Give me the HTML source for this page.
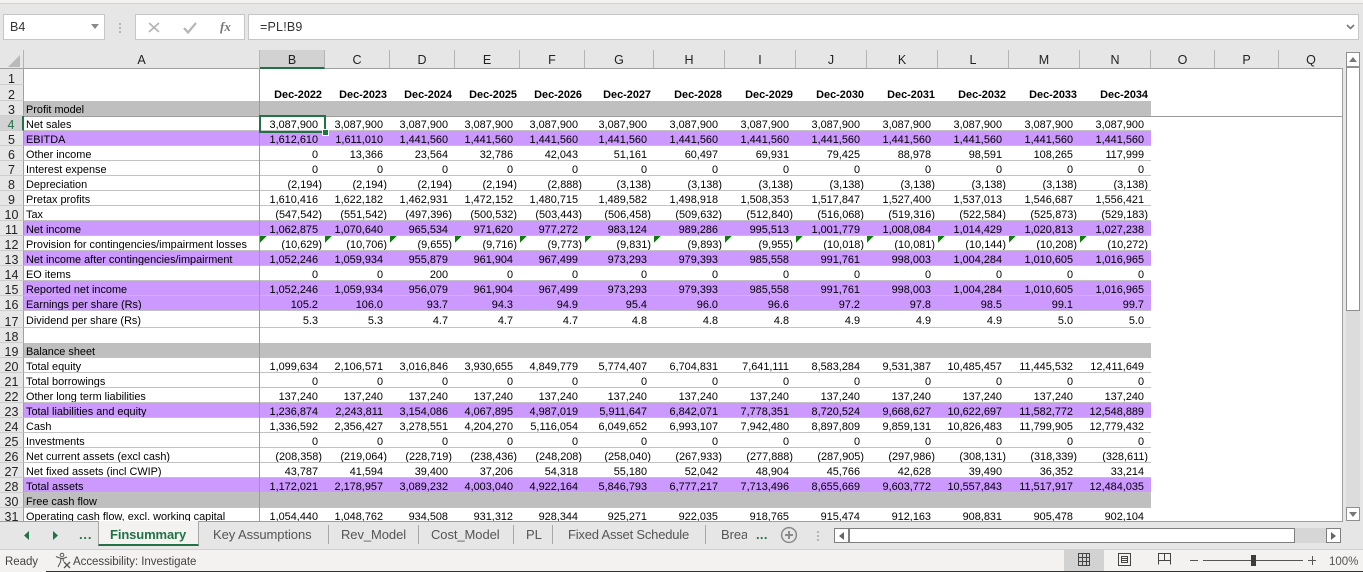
<!DOCTYPE html>
<html><head><meta charset="utf-8"><title>Finsummary</title>
<style>
html,body{margin:0;padding:0;width:1363px;height:572px;overflow:hidden;background:#e6e6e6}
body{position:relative;font-family:"Liberation Sans",Arial,sans-serif;color:#000}
.a{position:absolute}
.box{position:absolute;background:#fff;border:1px solid #c6c6c6;box-sizing:border-box}
.ch{position:absolute;top:50px;height:19px;box-sizing:border-box;border-right:1px solid #b4b4b4;border-bottom:1px solid #9f9f9f;font-size:12.5px;line-height:20px;text-align:center;color:#222}
#grid{position:absolute;left:0;top:69px;width:1342px;height:452px;overflow:hidden;background:#fff}
table{border-collapse:separate;border-spacing:0;table-layout:fixed;width:1151px;font-size:10.9px}
td,th{padding:0;box-sizing:border-box;white-space:nowrap;overflow:hidden}
th{background:#e6e6e6;font-weight:normal;font-size:12.5px;color:#222;text-align:center;border-right:1px solid #9f9f9f;border-bottom:1px solid #cdcdcd;line-height:10px;padding-top:4px;vertical-align:top}
td{text-align:right;padding-right:7px;border-bottom:1px solid #c2c2c2;vertical-align:bottom;line-height:9px}
td.l{text-align:left;padding:0 0 0 2px}
tr{height:15px}
tr.g td{background:#bfbfbf}
tr.v td{background:#cc99ff}
tr.p td{padding-right:3px}
tr.p td.l{padding:0 0 0 2px}
tr.n td{border-bottom:0;line-height:11px}
tr.r td{padding-bottom:1px}
tr.t td+td{background:linear-gradient(135deg,#0a7d0a 0,#0a7d0a 4.6px,transparent 4.7px) no-repeat}
.tab{position:absolute;top:525px;font-size:13px;line-height:19px;color:#555;letter-spacing:-.08px;white-space:nowrap}
.sep{position:absolute;top:525px;width:1px;height:19px;background:#a8a8a8}
.st{position:absolute;font-size:11.5px;color:#444;line-height:14px;letter-spacing:-.05px;white-space:nowrap}
</style></head><body>

<div class="a" style="left:0;top:0;width:1363px;height:3px;background:#f3f2f1;border-bottom:1px solid #d4d4d4"></div>

<!-- formula bar -->
<div class="box" style="left:3px;top:14px;width:102px;height:26px;font-size:12.5px;line-height:24px;padding-left:6px;color:#333">B4</div>
<svg class="a" style="left:91px;top:24px" width="8" height="5"><path d="M0 0H8L4 5Z" fill="#8a8a8a"/></svg>
<div class="a" style="left:119px;top:23px;width:2px;height:2px;background:#b5b5b5;box-shadow:0 4px #b5b5b5,0 8px #b5b5b5"></div>
<div class="box" style="left:135px;top:14px;width:110px;height:26px"></div>
<svg class="a" style="left:148px;top:22px" width="12" height="11"><path d="M1 1L11 10M11 1L1 10" stroke="#b5b5b5" stroke-width="1.7" fill="none"/></svg>
<svg class="a" style="left:183px;top:22px" width="14" height="12"><path d="M1 6L5 10.5L13 1" stroke="#b5b5b5" stroke-width="2.2" fill="none"/></svg>
<div class="a" style="left:220px;top:19px;font:italic bold 13px/16px 'Liberation Serif',serif;color:#777">fx</div>
<div class="box" style="left:248px;top:14px;width:1111px;height:26px;font-size:12.5px;line-height:24px;padding-left:11px;color:#333;letter-spacing:.2px">=PL!B9</div>
<svg class="a" style="left:1346px;top:24px" width="9" height="6"><path d="M1 1L4.5 4.5L8 1" stroke="#777" stroke-width="1.6" fill="none"/></svg>

<!-- column headers -->
<div class="a" style="left:0;top:50px;width:24px;height:19px;border-right:1px solid #b4b4b4;border-bottom:1px solid #9f9f9f;box-sizing:border-box"></div>
<svg class="a" style="left:8px;top:55px" width="12" height="12"><path d="M12 0V12H0Z" fill="#b9b9b9"/></svg>
<div class="ch" style="left:24px;width:236px">A</div>
<div class="ch" style="left:260px;width:65px;background:#d2d2d2;border-bottom:2px solid #217346">B</div>
<div class="ch" style="left:325px;width:65px">C</div>
<div class="ch" style="left:390px;width:65px">D</div>
<div class="ch" style="left:455px;width:65px">E</div>
<div class="ch" style="left:520px;width:65px">F</div>
<div class="ch" style="left:585px;width:69px">G</div>
<div class="ch" style="left:654px;width:71px">H</div>
<div class="ch" style="left:725px;width:71px">I</div>
<div class="ch" style="left:796px;width:71px">J</div>
<div class="ch" style="left:867px;width:71px">K</div>
<div class="ch" style="left:938px;width:71px">L</div>
<div class="ch" style="left:1009px;width:71px">M</div>
<div class="ch" style="left:1080px;width:71px">N</div>
<div class="ch" style="left:1151px;width:64px">O</div>
<div class="ch" style="left:1215px;width:64px">P</div>
<div class="ch" style="left:1279px;width:64px;border-right:0">Q</div>

<!-- grid -->
<div id="grid">
<table>
<colgroup><col style="width:24px"><col style="width:236px"><col style="width:65px"><col style="width:65px"><col style="width:65px"><col style="width:65px"><col style="width:65px"><col style="width:69px"><col style="width:71px"><col style="width:71px"><col style="width:71px"><col style="width:71px"><col style="width:71px"><col style="width:71px"><col style="width:71px"></colgroup>
<tr class="n" style="height:16px"><th style="padding-top:5px">1</th><td class="l"></td><td></td><td></td><td></td><td></td><td></td><td></td><td></td><td></td><td></td><td></td><td></td><td></td><td></td></tr>
<tr class="n p" style="height:16px;font-weight:bold"><th style="padding-top:5px">2</th><td class="l"></td><td>Dec-2022</td><td>Dec-2023</td><td>Dec-2024</td><td>Dec-2025</td><td>Dec-2026</td><td>Dec-2027</td><td>Dec-2028</td><td>Dec-2029</td><td>Dec-2030</td><td>Dec-2031</td><td>Dec-2032</td><td>Dec-2033</td><td>Dec-2034</td></tr>
<tr class="g"><th>3</th><td class="l">Profit model</td><td></td><td></td><td></td><td></td><td></td><td></td><td></td><td></td><td></td><td></td><td></td><td></td><td></td></tr>
<tr><th style="background:#d2d2d2;color:#217346;border-right:2px solid #217346">4</th><td class="l">Net sales</td><td>3,087,900</td><td>3,087,900</td><td>3,087,900</td><td>3,087,900</td><td>3,087,900</td><td>3,087,900</td><td>3,087,900</td><td>3,087,900</td><td>3,087,900</td><td>3,087,900</td><td>3,087,900</td><td>3,087,900</td><td>3,087,900</td></tr>
<tr class="v"><th>5</th><td class="l">EBITDA</td><td>1,612,610</td><td>1,611,010</td><td>1,441,560</td><td>1,441,560</td><td>1,441,560</td><td>1,441,560</td><td>1,441,560</td><td>1,441,560</td><td>1,441,560</td><td>1,441,560</td><td>1,441,560</td><td>1,441,560</td><td>1,441,560</td></tr>
<tr><th>6</th><td class="l">Other income</td><td>0</td><td>13,366</td><td>23,564</td><td>32,786</td><td>42,043</td><td>51,161</td><td>60,497</td><td>69,931</td><td>79,425</td><td>88,978</td><td>98,591</td><td>108,265</td><td>117,999</td></tr>
<tr><th>7</th><td class="l">Interest expense</td><td>0</td><td>0</td><td>0</td><td>0</td><td>0</td><td>0</td><td>0</td><td>0</td><td>0</td><td>0</td><td>0</td><td>0</td><td>0</td></tr>
<tr class="p"><th>8</th><td class="l">Depreciation</td><td>(2,194)</td><td>(2,194)</td><td>(2,194)</td><td>(2,194)</td><td>(2,888)</td><td>(3,138)</td><td>(3,138)</td><td>(3,138)</td><td>(3,138)</td><td>(3,138)</td><td>(3,138)</td><td>(3,138)</td><td>(3,138)</td></tr>
<tr><th>9</th><td class="l">Pretax profits</td><td>1,610,416</td><td>1,622,182</td><td>1,462,931</td><td>1,472,152</td><td>1,480,715</td><td>1,489,582</td><td>1,498,918</td><td>1,508,353</td><td>1,517,847</td><td>1,527,400</td><td>1,537,013</td><td>1,546,687</td><td>1,556,421</td></tr>
<tr class="p"><th>10</th><td class="l">Tax</td><td>(547,542)</td><td>(551,542)</td><td>(497,396)</td><td>(500,532)</td><td>(503,443)</td><td>(506,458)</td><td>(509,632)</td><td>(512,840)</td><td>(516,068)</td><td>(519,316)</td><td>(522,584)</td><td>(525,873)</td><td>(529,183)</td></tr>
<tr class="v"><th>11</th><td class="l">Net income</td><td>1,062,875</td><td>1,070,640</td><td>965,534</td><td>971,620</td><td>977,272</td><td>983,124</td><td>989,286</td><td>995,513</td><td>1,001,779</td><td>1,008,084</td><td>1,014,429</td><td>1,020,813</td><td>1,027,238</td></tr>
<tr class="p t"><th>12</th><td class="l">Provision for contingencies/impairment losses</td><td>(10,629)</td><td>(10,706)</td><td>(9,655)</td><td>(9,716)</td><td>(9,773)</td><td>(9,831)</td><td>(9,893)</td><td>(9,955)</td><td>(10,018)</td><td>(10,081)</td><td>(10,144)</td><td>(10,208)</td><td>(10,272)</td></tr>
<tr class="v"><th>13</th><td class="l">Net income after contingencies/impairment</td><td>1,052,246</td><td>1,059,934</td><td>955,879</td><td>961,904</td><td>967,499</td><td>973,293</td><td>979,393</td><td>985,558</td><td>991,761</td><td>998,003</td><td>1,004,284</td><td>1,010,605</td><td>1,016,965</td></tr>
<tr><th>14</th><td class="l">EO items</td><td>0</td><td>0</td><td>200</td><td>0</td><td>0</td><td>0</td><td>0</td><td>0</td><td>0</td><td>0</td><td>0</td><td>0</td><td>0</td></tr>
<tr class="v"><th>15</th><td class="l">Reported net income</td><td>1,052,246</td><td>1,059,934</td><td>956,079</td><td>961,904</td><td>967,499</td><td>973,293</td><td>979,393</td><td>985,558</td><td>991,761</td><td>998,003</td><td>1,004,284</td><td>1,010,605</td><td>1,016,965</td></tr>
<tr class="v"><th>16</th><td class="l">Earnings per share (Rs)</td><td>105.2</td><td>106.0</td><td>93.7</td><td>94.3</td><td>94.9</td><td>95.4</td><td>96.0</td><td>96.6</td><td>97.2</td><td>97.8</td><td>98.5</td><td>99.1</td><td>99.7</td></tr>
<tr class="r" style="height:17px"><th style="padding-top:6px">17</th><td class="l">Dividend per share (Rs)</td><td>5.3</td><td>5.3</td><td>4.7</td><td>4.7</td><td>4.7</td><td>4.8</td><td>4.8</td><td>4.8</td><td>4.9</td><td>4.9</td><td>4.9</td><td>5.0</td><td>5.0</td></tr>
<tr class="n"><th>18</th><td class="l"></td><td></td><td></td><td></td><td></td><td></td><td></td><td></td><td></td><td></td><td></td><td></td><td></td><td></td></tr>
<tr class="g"><th>19</th><td class="l">Balance sheet</td><td></td><td></td><td></td><td></td><td></td><td></td><td></td><td></td><td></td><td></td><td></td><td></td><td></td></tr>
<tr><th>20</th><td class="l">Total equity</td><td>1,099,634</td><td>2,106,571</td><td>3,016,846</td><td>3,930,655</td><td>4,849,779</td><td>5,774,407</td><td>6,704,831</td><td>7,641,111</td><td>8,583,284</td><td>9,531,387</td><td>10,485,457</td><td>11,445,532</td><td>12,411,649</td></tr>
<tr><th>21</th><td class="l">Total borrowings</td><td>0</td><td>0</td><td>0</td><td>0</td><td>0</td><td>0</td><td>0</td><td>0</td><td>0</td><td>0</td><td>0</td><td>0</td><td>0</td></tr>
<tr><th>22</th><td class="l">Other long term liabilities</td><td>137,240</td><td>137,240</td><td>137,240</td><td>137,240</td><td>137,240</td><td>137,240</td><td>137,240</td><td>137,240</td><td>137,240</td><td>137,240</td><td>137,240</td><td>137,240</td><td>137,240</td></tr>
<tr class="v"><th>23</th><td class="l">Total liabilities and equity</td><td>1,236,874</td><td>2,243,811</td><td>3,154,086</td><td>4,067,895</td><td>4,987,019</td><td>5,911,647</td><td>6,842,071</td><td>7,778,351</td><td>8,720,524</td><td>9,668,627</td><td>10,622,697</td><td>11,582,772</td><td>12,548,889</td></tr>
<tr><th>24</th><td class="l">Cash</td><td>1,336,592</td><td>2,356,427</td><td>3,278,551</td><td>4,204,270</td><td>5,116,054</td><td>6,049,652</td><td>6,993,107</td><td>7,942,480</td><td>8,897,809</td><td>9,859,131</td><td>10,826,483</td><td>11,799,905</td><td>12,779,432</td></tr>
<tr><th>25</th><td class="l">Investments</td><td>0</td><td>0</td><td>0</td><td>0</td><td>0</td><td>0</td><td>0</td><td>0</td><td>0</td><td>0</td><td>0</td><td>0</td><td>0</td></tr>
<tr class="p"><th>26</th><td class="l">Net current assets (excl cash)</td><td>(208,358)</td><td>(219,064)</td><td>(228,719)</td><td>(238,436)</td><td>(248,208)</td><td>(258,040)</td><td>(267,933)</td><td>(277,888)</td><td>(287,905)</td><td>(297,986)</td><td>(308,131)</td><td>(318,339)</td><td>(328,611)</td></tr>
<tr><th>27</th><td class="l">Net fixed assets (incl CWIP)</td><td>43,787</td><td>41,594</td><td>39,400</td><td>37,206</td><td>54,318</td><td>55,180</td><td>52,042</td><td>48,904</td><td>45,766</td><td>42,628</td><td>39,490</td><td>36,352</td><td>33,214</td></tr>
<tr class="v"><th>28</th><td class="l">Total assets</td><td>1,172,021</td><td>2,178,957</td><td>3,089,232</td><td>4,003,040</td><td>4,922,164</td><td>5,846,793</td><td>6,777,217</td><td>7,713,496</td><td>8,655,669</td><td>9,603,772</td><td>10,557,843</td><td>11,517,917</td><td>12,484,035</td></tr>
<tr class="g"><th>30</th><td class="l">Free cash flow</td><td></td><td></td><td></td><td></td><td></td><td></td><td></td><td></td><td></td><td></td><td></td><td></td><td></td></tr>
<tr><th>31</th><td class="l">Operating cash flow, excl. working capital</td><td>1,054,440</td><td>1,048,762</td><td>934,508</td><td>931,312</td><td>928,344</td><td>925,271</td><td>922,035</td><td>918,765</td><td>915,474</td><td>912,163</td><td>908,831</td><td>905,478</td><td>902,104</td></tr>
</table>
</div>

<!-- freeze lines, selection -->
<div class="a" style="left:259px;top:69px;width:1px;height:452px;background:#9a9a9a"></div>
<div class="a" style="left:24px;top:116px;width:1318px;height:1px;background:#9a9a9a"></div>
<div class="a" style="left:1342px;top:69px;width:1px;height:452px;background:#9f9f9f"></div>
<div class="a" style="left:259px;top:115px;width:67px;height:18px;border:2px solid #217346;box-sizing:border-box"></div>
<div class="a" style="left:322px;top:129px;width:5px;height:5px;background:#217346;border:1px solid #fff"></div>

<!-- vertical scrollbar -->
<div class="a" style="left:1346px;top:52px;width:14px;height:469px;background:#dcdcdc"></div>
<div class="a" style="left:1346px;top:52px;width:14px;height:15px;background:#fff;border:1px solid #8f8f8f;box-sizing:border-box"></div>
<svg class="a" style="left:1349px;top:57px" width="8" height="5"><path d="M4 0L8 5H0Z" fill="#777"/></svg>
<div class="a" style="left:1346px;top:67px;width:14px;height:244px;background:#fff;border:1px solid #8f8f8f;box-sizing:border-box"></div>
<div class="a" style="left:1346px;top:507px;width:14px;height:14px;background:#fff;border:1px solid #8f8f8f;box-sizing:border-box"></div>
<svg class="a" style="left:1349px;top:512px" width="8" height="5"><path d="M0 0H8L4 5Z" fill="#777"/></svg>

<!-- tab bar -->
<div class="a" style="left:0;top:521px;width:1343px;height:1px;background:#9f9f9f"></div>
<svg class="a" style="left:24px;top:531px" width="6" height="9"><path d="M5 0V9L0 4.5Z" fill="#217346"/></svg>
<svg class="a" style="left:53px;top:531px" width="6" height="9"><path d="M0 0V9L5 4.5Z" fill="#217346"/></svg>
<div class="a" style="left:79px;top:525px;font:bold 13px/19px 'Liberation Sans',sans-serif;color:#217346;letter-spacing:.8px">...</div>
<div class="a" style="left:98px;top:521px;width:101px;height:25px;background:#f3f2f1;border-left:1px solid #a8a8a8;border-right:1px solid #a8a8a8;border-bottom:2px solid #217346;box-sizing:border-box"></div>
<div class="tab" style="left:110px;font-weight:bold;color:#217346;letter-spacing:-.12px">Finsummary</div>
<div class="tab" style="left:213px">Key Assumptions</div><div class="sep" style="left:328px"></div>
<div class="tab" style="left:341px">Rev_Model</div><div class="sep" style="left:418px"></div>
<div class="tab" style="left:431px">Cost_Model</div><div class="sep" style="left:513px"></div>
<div class="tab" style="left:526px">PL</div><div class="sep" style="left:552px"></div>
<div class="tab" style="left:568px;letter-spacing:-.2px">Fixed Asset Schedule</div><div class="sep" style="left:705px"></div>
<div class="tab" style="left:721px;width:26px;overflow:hidden">Breakeven</div>
<div class="a" style="left:756px;top:525px;font:bold 13px/19px 'Liberation Sans',sans-serif;color:#217346;letter-spacing:.3px">...</div>
<svg class="a" style="left:780px;top:526px" width="18" height="18"><circle cx="9" cy="9" r="7.4" fill="none" stroke="#8a8a8a" stroke-width="1.5"/><path d="M9 5V13M5 9H13" stroke="#8a8a8a" stroke-width="2"/></svg>
<div class="a" style="left:817px;top:531px;width:2px;height:2px;background:#b5b5b5;box-shadow:0 4px #b5b5b5,0 8px #b5b5b5"></div>

<!-- horizontal scrollbar -->
<div class="a" style="left:834px;top:528px;width:506px;height:15px;background:#d6d6d6"></div>
<div class="a" style="left:834px;top:528px;width:15px;height:15px;background:#fff;border:1px solid #7f7f7f;box-sizing:border-box"></div>
<svg class="a" style="left:839px;top:532px" width="5" height="8"><path d="M5 0V8L0 4Z" fill="#666"/></svg>
<div class="a" style="left:849px;top:528px;width:446px;height:15px;background:#fff;border:1px solid #7f7f7f;box-sizing:border-box"></div>
<div class="a" style="left:1326px;top:528px;width:15px;height:15px;background:#fff;border:1px solid #7f7f7f;box-sizing:border-box"></div>
<svg class="a" style="left:1331px;top:532px" width="5" height="8"><path d="M0 0V8L5 4Z" fill="#666"/></svg>

<!-- status bar -->
<div class="a" style="left:0;top:549px;width:1363px;height:23px;background:#f3f2f1;border-top:1px solid #d0d0d0;box-sizing:border-box"></div>
<div class="a" style="left:46px;top:571px;width:1317px;height:1px;background:#333"></div>
<div class="st" style="left:5px;top:555px">Ready</div>
<svg class="a" style="left:55px;top:552px" width="17" height="17" fill="none" stroke="#555" stroke-width="1"><circle cx="7" cy="3" r="1.8"/><path d="M1 4.5L6 6.5H8L12 5M6 6.5L5.5 10L3 15M8 6.5L8.5 9.5"/><path d="M9 10L15 16M15 10L9 16" stroke-width="1.3"/></svg>
<div class="st" style="left:73px;top:555px">Accessibility: Investigate</div>
<div class="a" style="left:1064px;top:550px;width:40px;height:21px;background:#d2d2d2"></div>
<svg class="a" style="left:1077px;top:552px" width="14" height="15" fill="none" stroke="#444"><path d="M1.500 1.500H12.500V13.500H1.500ZM1.500 5.500H12.500M1.500 9.500H12.500M5.500 1.500V13.500M9.500 1.500V13.500"/></svg>
<svg class="a" style="left:1117px;top:552px" width="15" height="15" fill="none" stroke="#444"><path d="M1.500 1.500H13.500V13.500H1.500ZM4.500 4.500H10.500V10.500H4.500ZM4.500 6.500H10.500M4.500 8.500H10.500"/></svg>
<svg class="a" style="left:1157px;top:552px" width="15" height="14" fill="none" stroke="#444"><path d="M1.500 12.500V1.500H13.500V12.500M1.500 8.500H13.500M7.500 1.500V8.500"/></svg>
<div class="a" style="left:1190px;top:560px;width:8px;height:1px;background:#555"></div>
<div class="a" style="left:1203px;top:560px;width:100px;height:1px;background:#555"></div>
<div class="a" style="left:1251px;top:555px;width:5px;height:11px;background:#3c3c3c"></div>
<div class="a" style="left:1308px;top:560px;width:8px;height:1px;background:#555"></div>
<div class="a" style="left:1312px;top:556px;width:1px;height:9px;background:#555"></div>
<div class="st" style="left:1329px;top:555px;letter-spacing:0;color:#555">100%</div>
</body></html>
